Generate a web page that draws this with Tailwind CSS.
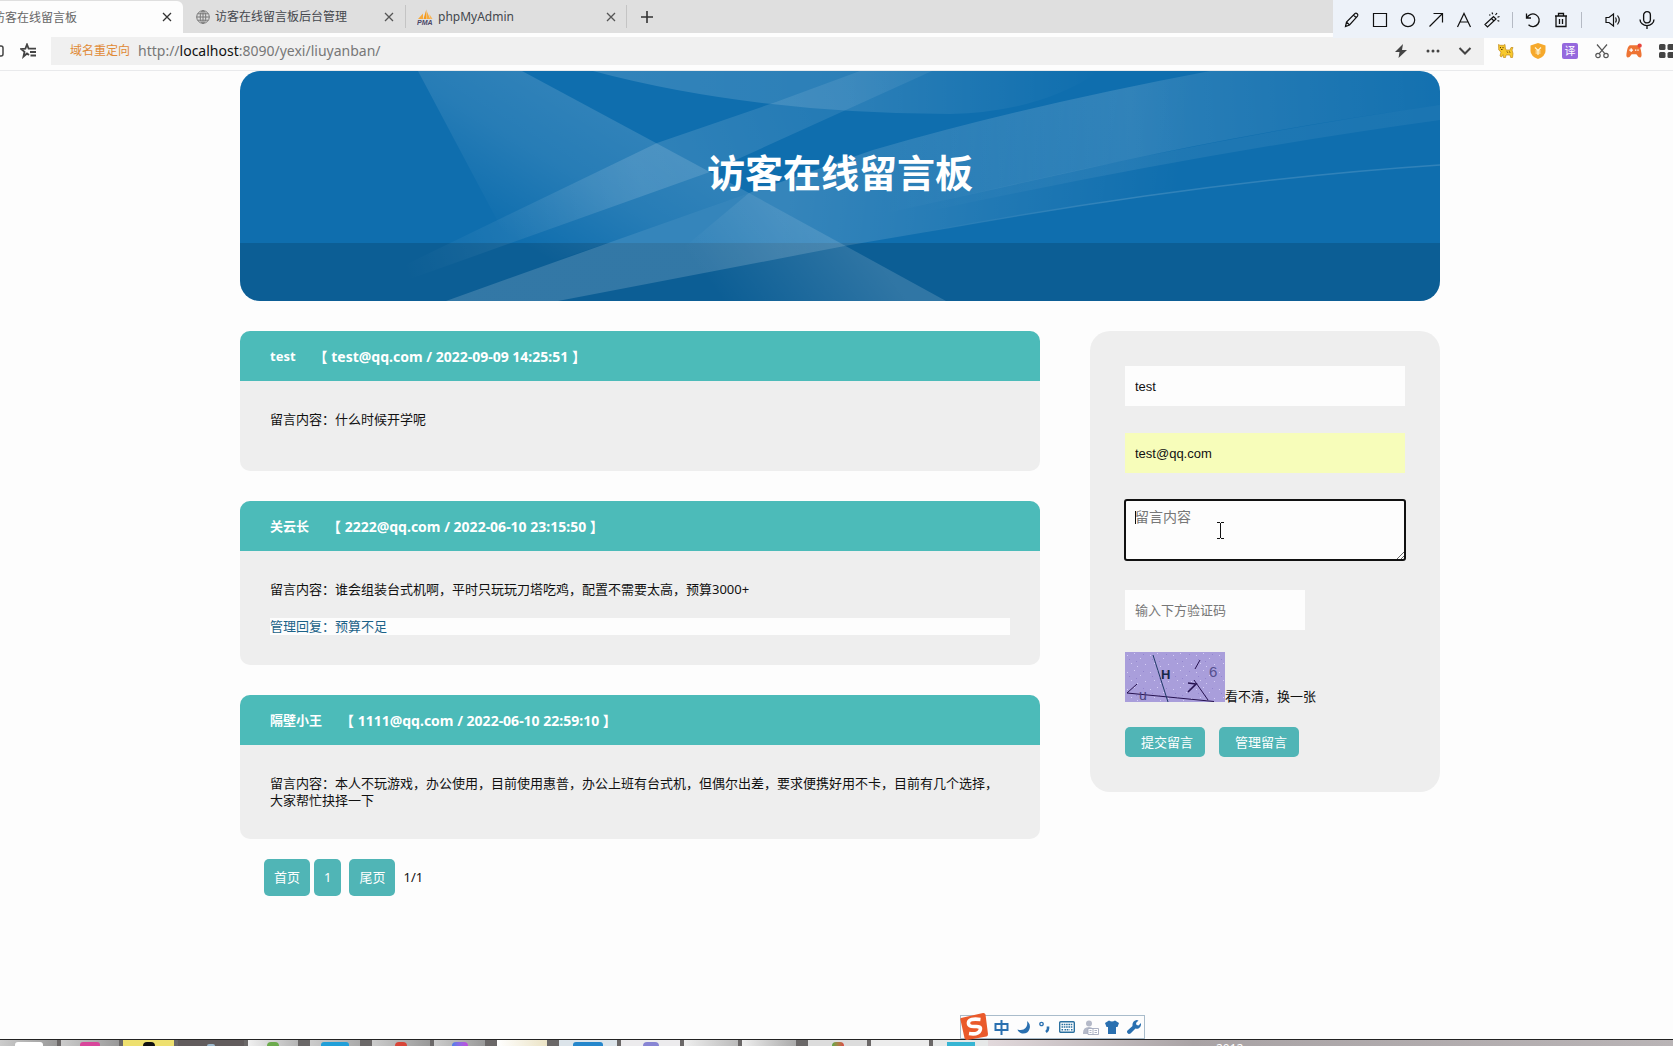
<!DOCTYPE html>
<html lang="zh-CN">
<head>
<meta charset="utf-8">
<meta name="viewport" content="width=device-width, initial-scale=1">
<title>访客在线留言板</title>
<script src="https://cdn.jsdelivr.net/npm/@tailwindcss/browser@4"></script>
</head>
<body class="relative flex min-h-screen flex-col overflow-x-hidden bg-[#fdfdfd] font-['Noto_Sans','Noto_Sans_CJK_SC',sans-serif] text-[13px] leading-[17px] text-[#111]">

<!-- Browser chrome -->
<header class="border-b border-[#e9eaec] bg-[#fdfdfd]">
  <nav class="flex h-[33px] items-stretch overflow-hidden bg-[#dfdfdf] text-[12px] text-[#44474d]" aria-label="标签页">
    <div class="mt-px flex w-[183px] shrink-0 items-center justify-between rounded-tr-md bg-[#fdfdfd] pr-[11px]">
      <a href="#" class="flex w-[77px] justify-end overflow-hidden whitespace-nowrap text-[#666]"><span>访客在线留言板</span></a>
      <button aria-label="关闭" class="size-[10px]"><svg viewBox="0 0 10 10" class="size-full" fill="none" stroke="#333" stroke-width="1.3"><path d="M1 1l8 8M9 1l-8 8"/></svg></button>
    </div>
    <div class="flex w-[222px] shrink-0 items-center justify-between pr-[11px] pl-[13px]">
      <a href="#" class="flex items-center gap-[5px] whitespace-nowrap">
        <svg viewBox="0 0 14 14" class="size-[14px]" fill="none" stroke="#777" stroke-width="1"><circle cx="7" cy="7" r="6.3"/><ellipse cx="7" cy="7" rx="2.8" ry="6.3"/><path d="M.7 7h12.6M7 .7v12.6M1.7 3.8h10.6M1.7 10.2h10.6"/></svg>
        访客在线留言板后台管理
      </a>
      <button aria-label="关闭" class="size-[10px]"><svg viewBox="0 0 10 10" class="size-full" fill="none" stroke="#555" stroke-width="1.3"><path d="M1 1l8 8M9 1l-8 8"/></svg></button>
    </div>
    <div class="my-[5px] flex w-[222px] shrink-0 items-center justify-between border-x border-[#c4c4c4] pr-[10px] pl-[11px]">
      <a href="#" class="flex items-center gap-[5px] whitespace-nowrap">
        <svg viewBox="0 0 16 16" class="size-[16px]"><path d="M6.500 10L9.300.5V10z" fill="#f59a1b"/><path d="M9.700 10V2l3.500 8z" fill="#f6a93a"/><path d="M1 10L6 4.500 6 10z" fill="#f6a93a"/><path d="M13.300 10l-1-5 3.200 5z" fill="#f8b455"/><text x="0" y="16" font-size="7" font-weight="800" font-style="italic" font-family="Liberation Sans" fill="#4a4668">PMA</text></svg>
        phpMyAdmin
      </a>
      <button aria-label="关闭" class="size-[10px]"><svg viewBox="0 0 10 10" class="size-full" fill="none" stroke="#555" stroke-width="1.3"><path d="M1 1l8 8M9 1l-8 8"/></svg></button>
    </div>
    <button aria-label="新标签页" class="ml-[13px] flex items-center"><svg viewBox="0 0 14 14" class="size-[14px]" fill="none" stroke="#333" stroke-width="1.600"><path d="M7 1v12M1 7h12"/></svg></button>
  </nav>
  <div class="flex h-[37px] items-center pb-[2px]">
    <div class="flex w-[51px] shrink-0 items-center gap-4">
      <svg viewBox="0 0 4 12" class="h-3 w-1" fill="none" stroke="#444" stroke-width="1.500"><path d="M0 1h1q2 0 2 2v6q0 2-2 2H0"/></svg>
      <button aria-label="收藏"><svg viewBox="0 0 17 16" class="h-4 w-[17px]" fill="none" stroke="#444" stroke-width="1.800"><path d="M9 12L7 10.500 3.500 13.500l1-4.700L1 6l4.400-.4L7 1.500l1.600 4.100H16M10 9h6M10.500 12.500H16"/></svg></button>
    </div>
    <div class="flex h-7 min-w-0 flex-1 items-center justify-between bg-[#f0f0f0] pr-3 pl-[19px]">
      <div class="flex items-center gap-2 whitespace-nowrap">
        <span class="text-[12px] text-[#e08a35]">域名重定向</span>
        <span class="text-[14px] text-[#777]">http://<span class="text-[#111]">localhost</span>:8090/yexi/liuyanban/</span>
      </div>
      <div class="flex items-center gap-[18px] text-[#444]">
        <svg viewBox="0 0 14 14" class="size-[14px]" fill="currentColor"><path d="M9 0L1 8h4.500L4.500 14 13 6H8z"/></svg>
        <svg viewBox="0 0 14 4" class="h-1 w-[14px]" fill="currentColor"><circle cx="2" cy="2" r="1.500"/><circle cx="7" cy="2" r="1.500"/><circle cx="12" cy="2" r="1.500"/></svg>
        <svg viewBox="0 0 14 8" class="h-2 w-[14px]" fill="none" stroke="currentColor" stroke-width="2"><path d="M1.500 1l5.500 5.500L12.500 1"/></svg>
      </div>
    </div>
    <div class="flex w-[189px] shrink-0 items-center gap-4 overflow-hidden pl-[14px]">
      <svg viewBox="0 0 16 16" class="size-4 shrink-0"><path d="M.5 1.500l1.500.8h3.500L7 1.500 7.300 5l.7 2h4l1-2.500h2l-1 2.500 1 3.500-.5 4h-1.800L12 12H8l-.5 2.500H5.500L5 11.500 3.500 14 2 13l1-4L.8 7z" fill="#f8c92c" stroke="#c28a1a" stroke-width=".7"/><path d="M2.500 4v1.200M5 4v1.200M3 6.500h1.500M9 8.500l.8 1.200M11.500 8.500l.5 1.200" stroke="#5c3b0b" stroke-width="1"/></svg>
      <svg viewBox="0 0 16 16" class="size-4 shrink-0"><path d="M8 0l7.500 2.500V8q0 5-7.500 8Q.5 13 .5 8V2.500z" fill="#f6a92c"/><path d="M5 4.500l3 3 3-3M8 7.500V12M5.500 8h5M5.500 10h5" fill="none" stroke="#fff3d0" stroke-width="1.200"/></svg>
      <span class="flex size-4 shrink-0 items-center justify-center rounded-[2px] bg-[#9569de] text-[11px] leading-4 text-white">译</span>
      <svg viewBox="0 0 16 16" class="size-4 shrink-0" fill="none" stroke="#555" stroke-width="1.200"><circle cx="4" cy="12.500" r="2.200"/><circle cx="12" cy="12.500" r="2.200"/><path d="M3 1.500l7.800 9.200M13 1.500l-7.800 9.200"/></svg>
      <svg viewBox="0 0 17 16" class="h-4 w-4 shrink-0"><path d="M4 2h9q2.500 1 3.500 9 .3 4-1.500 4t-4-3.500H6Q4 15 2 15T.5 11Q1.500 3 4 2z" fill="#ee7434"/><circle cx="14.500" cy="2.300" r="2.300" fill="#e7443c"/><path d="M3.500 7h4M5.500 5v4M9.500 7h1.500M12 7h1.500" stroke="#fff" stroke-width="1.300"/></svg>
      <svg viewBox="0 0 16 16" class="size-4 shrink-0" fill="#444"><rect x="1" y="1" width="6.500" height="6" rx="1.500"/><rect x="9.500" y="1" width="6.500" height="6" rx="1.500"/><rect x="1" y="9" width="6.500" height="6" rx="1.500"/><rect x="9.500" y="9" width="6.500" height="6" rx="1.500"/></svg>
    </div>
  </div>
</header>

<!-- Floating recorder toolbar -->
<div class="absolute top-0 right-0 flex h-[38px] w-[340px] items-center overflow-hidden bg-[#edf2f9] pt-[2px] pl-[11px] text-[#111]" role="toolbar" aria-label="标注工具">
  <div class="flex items-center gap-3">
    <button aria-label="铅笔" class="size-4"><svg viewBox="0 0 16 16" fill="none" stroke="currentColor" stroke-width="1.200"><path d="M1.500 14.500l1-4.500L11 1.500q1-.7 2.200.3t.3 2.300L5.500 13zM9.500 3l3 3M2.500 10L5.500 13"/></svg></button>
    <button aria-label="矩形" class="size-4"><svg viewBox="0 0 16 16" fill="none" stroke="currentColor" stroke-width="1.200"><path d="M1.500 1.500h13v13h-13z"/></svg></button>
    <button aria-label="圆形" class="size-4"><svg viewBox="0 0 16 16" fill="none" stroke="currentColor" stroke-width="1.200"><circle cx="8" cy="8" r="6.700"/></svg></button>
    <button aria-label="箭头" class="size-4"><svg viewBox="0 0 16 16" fill="none" stroke="currentColor" stroke-width="1.200"><path d="M1.500 14.500l13-13M5.500 1.500h9v9"/></svg></button>
    <button aria-label="文字" class="size-4"><svg viewBox="0 0 16 16" fill="none" stroke="currentColor" stroke-width="1.200"><path d="M1.500 15L8 1.500 14.500 15M4 10h8"/></svg></button>
    <button aria-label="魔棒" class="size-4"><svg viewBox="0 0 16 16" fill="none" stroke="currentColor" stroke-width="1.200"><path d="M1 12.500L9.500 4.500l2.500 2.500L3.500 15zM7.500 6.500L10 9M8 .5l.7 1.800M13 1l-1.500 2M15.500 4.500l-2 .8M13.500 8.500l1.800.8M5 3h1.500"/></svg></button>
  </div>
  <span class="mx-3 h-4 w-px bg-[#b5bac4]"></span>
  <div class="flex items-center gap-3">
    <button aria-label="撤销" class="size-4"><svg viewBox="0 0 16 16" fill="none" stroke="currentColor" stroke-width="1.300"><path d="M1.500 1.500v4.500H6M2 6a6.300 6.300 0 1 1 1.500 6.800"/></svg></button>
    <button aria-label="删除" class="size-4"><svg viewBox="0 0 16 16" fill="none" stroke="currentColor" stroke-width="1.300"><path d="M2 4h12M5.500 4V1.500h5V4M3 4v10.500h10V4M6.500 7v5M9.500 7v5"/></svg></button>
  </div>
  <span class="mx-3 h-4 w-px bg-[#b5bac4]"></span>
  <div class="ml-[11px] flex items-center gap-[17px]">
    <button aria-label="声音" class="size-4"><svg viewBox="0 0 16 16" fill="none" stroke="currentColor" stroke-width="1.200"><path d="M1 5.500h3L8.500 2v12L4 10.500H1zM10.500 5.500q1.500 2.500 0 5M12.500 3.500q3.500 4.500 0 9"/></svg></button>
    <button aria-label="麦克风" class="size-[18px]"><svg viewBox="0 0 16 16" fill="none" stroke="currentColor" stroke-width="1.200"><rect x="5" y=".6" width="6" height="10" rx="3"/><path d="M1.800 7.500a6.200 5.500 0 0 0 12.400 0M8 13v3"/></svg></button>
  </div>
</div>

<!-- Guest book page -->
<div class="pl-[7px]">
<main class="mx-auto w-full max-w-[1200px]">
  <div class="relative flex h-[230px] items-center justify-center overflow-hidden rounded-[20px] bg-[#0f6eae]">
    <svg viewBox="0 0 1200 230" preserveAspectRatio="none" class="absolute inset-0 size-full">
      <defs>
        <linearGradient id="cone" gradientUnits="userSpaceOnUse" x1="400" y1="40" x2="310" y2="190"><stop offset="0" stop-color="#fff" stop-opacity=".15"/><stop offset=".5" stop-color="#fff" stop-opacity=".1"/><stop offset="1" stop-color="#fff" stop-opacity="0"/></linearGradient>
        <linearGradient id="base" gradientUnits="userSpaceOnUse" x1="610" y1="150" x2="490" y2="240"><stop offset="0" stop-color="#fff" stop-opacity=".15"/><stop offset="1" stop-color="#fff" stop-opacity="0"/></linearGradient>
        <linearGradient id="beam" gradientUnits="userSpaceOnUse" x1="164" y1="200" x2="690" y2="0"><stop offset="0" stop-color="#fff" stop-opacity="0"/><stop offset=".45" stop-color="#fff" stop-opacity=".14"/><stop offset="1" stop-color="#fff" stop-opacity=".06"/></linearGradient>
        <linearGradient id="wide" gradientUnits="userSpaceOnUse" x1="300" y1="100" x2="1000" y2="200"><stop offset="0" stop-color="#fff" stop-opacity=".16"/><stop offset=".35" stop-color="#fff" stop-opacity=".16"/><stop offset=".9" stop-color="#fff" stop-opacity="0"/></linearGradient>
        <linearGradient id="sheet" gradientUnits="userSpaceOnUse" x1="640" y1="90" x2="1200" y2="60"><stop offset="0" stop-color="#fff" stop-opacity="0"/><stop offset=".45" stop-color="#fff" stop-opacity=".12"/><stop offset="1" stop-color="#fff" stop-opacity=".02"/></linearGradient>
        <linearGradient id="streak" gradientUnits="userSpaceOnUse" x1="680" y1="0" x2="1200" y2="0"><stop offset="0" stop-color="#fff" stop-opacity="0"/><stop offset=".4" stop-color="#fff" stop-opacity=".07"/><stop offset="1" stop-color="#fff" stop-opacity=".05"/></linearGradient>
        <linearGradient id="hair" gradientUnits="userSpaceOnUse" x1="680" y1="0" x2="1200" y2="0"><stop offset="0" stop-color="#fff" stop-opacity="0"/><stop offset=".4" stop-color="#fff" stop-opacity=".14"/><stop offset="1" stop-color="#fff" stop-opacity=".14"/></linearGradient>
        <linearGradient id="arc" x1="0" y1="0" x2="1" y2="0"><stop offset="0" stop-color="#fff" stop-opacity=".15"/><stop offset=".5" stop-color="#fff" stop-opacity=".12"/><stop offset="1" stop-color="#fff" stop-opacity="0"/></linearGradient>
      </defs>
      <path d="M0 172H1200V230H0z" fill="#000" fill-opacity=".14"/>
      <path d="M178 0H282L509 122L371 171L284 200z" fill="url(#cone)"/>
      <path d="M509 122L706 230H380z" fill="url(#base)"/>
      <path d="M140 206L417 72L536 31L620 0H692L467 102L170 208z" fill="url(#beam)"/>
      <path d="M206 230L371 171L509 122L633 79Q780 36 970 0H1200V94Q960 112 710 157L610 174L318 230z" fill="url(#wide)"/>
      <path d="M633 79Q780 36 970 0H1200V34Q1027 58 877 91L633 145z" fill="url(#sheet)"/>
      <path d="M680 135Q960 68 1200 34V49Q960 82 680 142z" fill="url(#streak)"/>
      <path d="M680 162Q960 110 1200 94" fill="none" stroke="url(#hair)" stroke-width="1.500"/>
      <path d="M353 0Q510 42 710 43Q800 41 860 0z" fill="url(#arc)"/>
    </svg>
    <h1 class="relative pb-7 text-[38px] leading-[52px] font-bold text-white">访客在线留言板</h1>
  </div>

  <div class="mt-[30px] flex items-start justify-between gap-[50px]">
    <section class="flex min-w-0 flex-1 flex-col gap-[30px]" aria-label="留言列表">
      <article class="overflow-hidden rounded-[10px] bg-[#eee]">
        <h2 class="flex h-[50px] items-center gap-[18px] bg-[#4cbbb9] px-[30px] font-bold text-white"><span>test</span><span class="text-[14px]">【 test@qq.com / 2022-09-09 14:25:51 】</span></h2>
        <div class="min-h-[90px] p-[30px]"><p>留言内容：什么时候开学呢</p></div>
      </article>
      <article class="overflow-hidden rounded-[10px] bg-[#eee]">
        <h2 class="flex h-[50px] items-center gap-[18px] bg-[#4cbbb9] px-[30px] font-bold text-white"><span>关云长</span><span class="text-[14px]">【 2222@qq.com / 2022-06-10 23:15:50 】</span></h2>
        <div class="min-h-[90px] p-[30px]">
          <p>留言内容：谁会组装台式机啊，平时只玩玩刀塔吃鸡，配置不需要太高，预算3000+</p>
          <p class="mt-5 bg-[#fdfdfd] text-[#1b6288]">管理回复：预算不足</p>
        </div>
      </article>
      <article class="overflow-hidden rounded-[10px] bg-[#eee]">
        <h2 class="flex h-[50px] items-center gap-[18px] bg-[#4cbbb9] px-[30px] font-bold text-white"><span>隔壁小王</span><span class="text-[14px]">【 1111@qq.com / 2022-06-10 22:59:10 】</span></h2>
        <div class="min-h-[90px] p-[30px]"><p>留言内容：本人不玩游戏，办公使用，目前使用惠普，办公上班有台式机，但偶尔出差，要求便携好用不卡，目前有几个选择，<br>大家帮忙抉择一下</p></div>
      </article>
      <nav class="-mt-[10px] flex items-center gap-2 pl-6" aria-label="分页">
        <div class="flex gap-1 text-white">
          <a href="#" class="rounded-[5px] bg-[#50b5b6] p-[10px]">首页</a>
          <a href="#" class="rounded-[5px] bg-[#50b5b6] p-[10px]">1</a>
        </div>
        <a href="#" class="rounded-[5px] bg-[#50b5b6] p-[10px] text-white">尾页</a>
        <span>1/1</span>
      </nav>
    </section>

    <form class="w-[350px] shrink-0 rounded-[20px] bg-[#eee] p-[35px]">
      <input aria-label="姓名" type="text" value="test" class="block h-10 w-full bg-[#fdfdfd] px-[10px] font-['Liberation_Sans',sans-serif]">
      <input aria-label="邮箱" type="text" value="test@qq.com" class="mt-[27px] block h-10 w-full bg-[#f7fdba] px-[10px] font-['Liberation_Sans',sans-serif]">
      <div class="relative mt-[27px]">
        <textarea aria-label="留言内容" placeholder="留言内容" class="block h-[60px] w-full rounded-[2px] bg-[#fdfdfd] px-[10px] py-2 font-['Noto_Sans_CJK_SC',sans-serif] text-[14px] leading-[17px] outline-2 -outline-offset-1 outline-[#111] placeholder:text-[#777]"></textarea>
        <span class="absolute top-[11px] left-[10px] h-[13px] w-px bg-[#111]"></span>
        <svg viewBox="0 0 9 17" class="absolute top-[22px] left-[91px] h-[17px] w-[9px]" fill="none" stroke="#111"><path d="M1 .5h3M5 .5h3M4.500 1v15M1 16.500h3M5 16.500h3"/></svg>
      </div>
      <input aria-label="验证码" type="text" placeholder="输入下方验证码" class="mt-[30px] block h-10 w-[180px] bg-[#fdfdfd] px-[10px] placeholder:text-[#777]">
      <div class="mt-[22px] flex items-end">
        <svg viewBox="0 0 100 50" class="h-[50px] w-[100px] bg-[#a99edb]" role="img" aria-label="验证码图片">
          <defs><pattern id="dots" width="23" height="17" patternUnits="userSpaceOnUse"><path d="M2 3h1v1H2zM9 1h1v1H9zM15 6h1v1h-1zM20 12h1v1h-1zM6 11h1v1H6zM12 14h1v1h-1z" fill="#d5cdf6"/><path d="M4 7h1v1H4zM18 2h1v1h-1zM11 9h1v1h-1z" fill="#9385cf"/></pattern></defs>
          <path d="M0 0h100v50H0z" fill="url(#dots)"/>
          <g fill="none" stroke="#26124f" stroke-width="1"><path d="M12 32L2 41l31 3 56 5.500M75 8l-5 9M69 28l14 20"/><path d="M28 3l15 47" stroke="#1f3a66"/><path d="M63 31l8 1-8 8" stroke-width="1.600"/></g>
          <g font-family="Liberation Sans"><text x="36" y="27" font-size="13" font-weight="700" fill="#162846">H</text><text x="84" y="25" font-size="15" fill="#55508f">6</text><text x="14" y="48" font-size="14" fill="#4a3f7c">u</text></g>
        </svg>
        <a href="#" class="-mb-[3px]">看不清，换一张</a>
      </div>
      <div class="mt-[25px] flex gap-[14px]">
        <button type="button" class="h-[30px] w-20 rounded-[5px] bg-[#50b5b6] pl-1 text-white">提交留言</button>
        <button type="button" class="h-[30px] w-20 rounded-[5px] bg-[#50b5b6] pl-1 text-white">管理留言</button>
      </div>
    </form>
  </div>
</main>
</div>

<!-- Input method bar -->
<div class="absolute bottom-[7px] left-[960px] z-10 flex h-[24px] w-[185px] items-center gap-2 border border-[#a9bccb] bg-[#fdfdfd] pl-[33px] text-[#2a70b0]">
  <svg viewBox="0 0 28 28" class="absolute -top-[4px] -left-px size-7"><path d="M1 6L23 1q2-.3 2.500 1.500L28 22q0 2-1.500 2.500L7 28q-2 0-2.500-2L.5 8Q0 6.500 1 6z" fill="#ea5a2b"/><path d="M20.500 7.500Q9 6 8.500 10.500T15 14.500t5 4-11 3" fill="none" stroke="#fff" stroke-width="3.600"/></svg>
  <svg viewBox="0 0 15 15" class="size-[15px]" fill="none" stroke="currentColor" stroke-width="2"><path d="M1.500 4h12v6h-12zM7.500 0v15"/></svg>
  <svg viewBox="0 0 14 14" class="size-[14px]" fill="currentColor"><path d="M10 1q4 3 2.500 8T5 13.500Q1 12 .5 9.500 6 11 8.500 8T10 1z"/></svg>
  <svg viewBox="0 0 12 12" class="size-3" fill="none" stroke="currentColor"><circle cx="2.500" cy="3" r="1.700" stroke-width="1.300"/><path d="M9 5.500v2q0 2-2 3.500" stroke-width="2.600"/></svg>
  <svg viewBox="0 0 16 12" class="h-3 w-4"><rect x=".7" y=".7" width="14.600" height="10.600" rx="1" fill="#fff" stroke="#2a709f" stroke-width="1.400"/><path d="M2.500 3.500h11M2.500 6h11M2.500 8.700h1.700M5.500 8.700h5M12 8.700h1.500" stroke="#2a709f" stroke-width="1.500" stroke-dasharray="1.600 .7"/></svg>
  <svg viewBox="0 0 16 15" class="h-[15px] w-4"><circle cx="6" cy="3.500" r="3" fill="#b4b9c8"/><path d="M0 13q0-6 6-6 3 0 4 2v5H0z" fill="#b4b9c8"/><path d="M5 8.500h10.500v6H5zM10 8.500v6M6.500 10.500h2M11.500 10.500h2.500M6.500 12.500h2M11.500 12.500h2.500" fill="#fff" stroke="#a4aabd" stroke-width=".9"/></svg>
  <svg viewBox="0 0 14 14" class="-ml-[2px] size-[14px]" fill="currentColor"><path d="M4 .5q3 2 6 0L14 3l-1.500 4H11v7H3V7H1.500L0 3z"/></svg>
  <svg viewBox="0 0 14 14" class="size-[14px]" fill="currentColor"><path d="M9.500 0Q11 0 11.500.5L9 3l.5 2 2 .5L14 3q.5 4-2.500 5.500-1.500.5-3 0L3.500 13.500Q1.500 14.500.5 13t0-2.500L5.500 6Q5 1 9.500 0z"/></svg>
</div>

<!-- Taskbar -->
<footer class="mt-auto flex h-[7px] items-stretch overflow-hidden border-t border-[#222] bg-linear-to-r from-[#777] via-[#c9c3c5] to-[#a49ea0]">
  <div class="flex w-[988px] shrink-0 gap-1 bg-[#6b6868]">
    <div class="flex w-[57px] items-end justify-center bg-linear-to-r from-[#ccc] to-[#999]"><span class="h-1 w-7 rounded-t-[3px] bg-white"></span></div>
    <div class="flex w-[58px] items-end justify-center bg-linear-to-r from-[#ccc] to-[#999]"><span class="h-1 w-5 rounded-t-[3px] bg-[#d8469b]"></span></div>
    <div class="flex w-[51px] items-end justify-center bg-[#eee06f]"><span class="h-1 w-3 rounded-t-full bg-[#111]"></span></div>
    <div class="flex w-[66px] items-end justify-center bg-[#625c5d]"><span class="h-[2px] w-2 rounded-t-full bg-[#9cb8cc]"></span></div>
    <div class="mr-2 flex w-[50px] items-end justify-center bg-linear-to-r from-[#f0f0f0] to-[#b5b5b5]"><span class="h-1 w-3 rounded-t-full bg-[#6cab4d]"></span></div>
    <div class="mr-2 flex w-[50px] items-end justify-center bg-linear-to-r from-[#ccc] to-[#aaa]"><span class="h-1 w-7 rounded-t-[3px] bg-[#219fd8]"></span></div>
    <div class="flex w-[58px] items-end justify-center bg-linear-to-r from-[#ccc] to-[#999]"><span class="h-1 w-3 rounded-t-full bg-[#d84538]"></span></div>
    <div class="mr-2 flex w-[51px] items-end justify-center bg-linear-to-r from-[#ccc] to-[#999]"><span class="h-1 w-4 rounded-t-full bg-linear-to-r from-[#497dea] to-[#c148dc]"></span></div>
    <div class="mr-2 w-[50px] bg-linear-to-r from-white to-[#ece4c6]"></div>
    <div class="flex w-[58px] items-end justify-center bg-[#dce4ea]"><span class="h-1 w-[30px] rounded-t-[3px] bg-[#2587cc]"></span></div>
    <div class="flex w-[59px] items-end justify-center bg-[#ecebed]"><span class="h-1 w-4 rounded-t-full bg-[#8885d4]"></span></div>
    <div class="w-[54px] bg-linear-to-r from-[#efefef] to-[#bbb]"></div>
    <div class="mr-2 w-[54px] bg-linear-to-r from-[#efefef] to-[#aaa]"></div>
    <div class="flex w-[59px] items-end justify-center bg-[#dcdcdc]"><span class="h-1 w-3 rounded-t-full bg-linear-to-r from-[#56a846] to-[#d84747]"></span></div>
    <div class="w-[58px] bg-[#ececec]"></div>
    <div class="flex flex-1 items-end justify-center bg-[#e6e8e8]"><span class="h-1 w-7 bg-[#37b5d3]"></span></div>
  </div>
  <div class="flex-1 bg-linear-to-r from-[#e2d9dc] via-[#a9a3a5] via-30% to-[#b9b4b6] pl-[228px] text-[12px] text-white">2012</div>
</footer>
</body>
</html>
